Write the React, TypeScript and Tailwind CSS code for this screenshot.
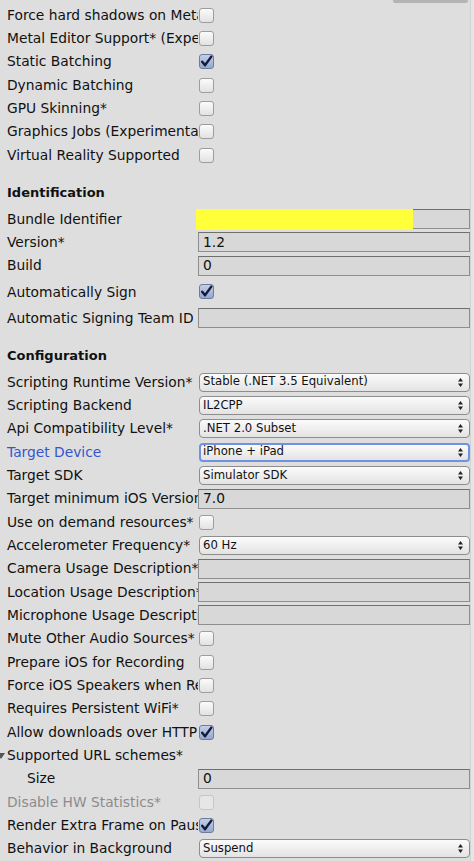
import React from 'react'

type Row =
  | { kind: 'check'; label: string; checked?: boolean; disabled?: boolean; h?: string }
  | { kind: 'text'; label: string; value?: string; redacted?: boolean; indent?: boolean; h?: string }
  | { kind: 'popup'; label: string; value: string; focused?: boolean }
  | { kind: 'foldout'; label: string }
  | { kind: 'heading'; label: string }

const rows: Row[] = [
  { kind: 'check', label: 'Force hard shadows on Metal' },
  { kind: 'check', label: 'Metal Editor Support* (Experimental)' },
  { kind: 'check', label: 'Static Batching', checked: true },
  { kind: 'check', label: 'Dynamic Batching' },
  { kind: 'check', label: 'GPU Skinning*' },
  { kind: 'check', label: 'Graphics Jobs (Experimental)*' },
  { kind: 'check', label: 'Virtual Reality Supported' },
  { kind: 'heading', label: 'Identification' },
  { kind: 'text', label: 'Bundle Identifier', redacted: true },
  { kind: 'text', label: 'Version*', value: '1.2' },
  { kind: 'text', label: 'Build', value: '0' },
  { kind: 'check', label: 'Automatically Sign', checked: true, h: 'h-[29px]' },
  { kind: 'text', label: 'Automatic Signing Team ID' },
  { kind: 'heading', label: 'Configuration' },
  { kind: 'popup', label: 'Scripting Runtime Version*', value: 'Stable (.NET 3.5 Equivalent)' },
  { kind: 'popup', label: 'Scripting Backend', value: 'IL2CPP' },
  { kind: 'popup', label: 'Api Compatibility Level*', value: '.NET 2.0 Subset' },
  { kind: 'popup', label: 'Target Device', value: 'iPhone + iPad', focused: true },
  { kind: 'popup', label: 'Target SDK', value: 'Simulator SDK' },
  { kind: 'text', label: 'Target minimum iOS Version', value: '7.0' },
  { kind: 'check', label: 'Use on demand resources*' },
  { kind: 'popup', label: 'Accelerometer Frequency*', value: '60 Hz' },
  { kind: 'text', label: 'Camera Usage Description*' },
  { kind: 'text', label: 'Location Usage Description*' },
  { kind: 'text', label: 'Microphone Usage Description*' },
  { kind: 'check', label: 'Mute Other Audio Sources*' },
  { kind: 'check', label: 'Prepare iOS for Recording' },
  { kind: 'check', label: 'Force iOS Speakers when Recording Mute Switch is On' },
  { kind: 'check', label: 'Requires Persistent WiFi*' },
  { kind: 'check', label: 'Allow downloads over HTTP (nonsecure)*', checked: true },
  { kind: 'foldout', label: 'Supported URL schemes*' },
  { kind: 'text', label: 'Size', value: '0', indent: true },
  { kind: 'check', label: 'Disable HW Statistics*', disabled: true },
  { kind: 'check', label: 'Render Extra Frame on Pause', checked: true },
  { kind: 'popup', label: 'Behavior in Background', value: 'Suspend' },
]

function Checkbox({ checked, disabled }: { checked?: boolean; disabled?: boolean }) {
  if (disabled) {
    return <div className="ml-[1px] h-[15px] w-[15px] rounded-[3px] border border-[#c6c6c6] bg-[#e6e6e6]" />
  }
  if (checked) {
    return (
      <div className="ml-[1px] flex h-[15px] w-[15px] items-center justify-center rounded-[3px] border border-[#6d7c9e] bg-gradient-to-b from-[#c3cfe6] to-[#95a8cf]">
        <svg width="13" height="13" viewBox="0 0 13 13">
          <path d="M2.2 6.8 L5 10.2 L11.3 1.6" fill="none" stroke="#121c3a" strokeWidth="2.4" strokeLinecap="round" strokeLinejoin="round" />
        </svg>
      </div>
    )
  }
  return <div className="ml-[1px] h-[15px] w-[15px] rounded-[3px] border border-[#9d9d9d] bg-gradient-to-b from-[#fbfbfb] to-[#e2e2e2]" />
}

function TextField({ value, redacted }: { value?: string; redacted?: boolean }) {
  return (
    <div className="relative flex h-[20px] w-[272px] items-center border border-[#8e8e8e] border-t-[#6f6f6f] bg-[#d8d8d8] pl-[4px] text-[13.8px] text-[#111]">
      {value}
      {redacted && <div className="absolute -left-[3px] -top-[1px] h-[21px] w-[217px] bg-[#ffff3a]" />}
    </div>
  )
}

function Popup({ value, focused }: { value: string; focused?: boolean }) {
  return (
    <div
      className={
        focused
          ? 'ml-[1px] flex h-[19px] w-[271px] items-center justify-between rounded-[4px] border-2 border-[#6f93e2] bg-gradient-to-b from-[#fbfbfb] to-[#e3e3e3] pl-[2px] pr-[5px] text-[11.7px] text-[#111]'
          : 'ml-[1px] flex h-[19px] w-[271px] items-center justify-between rounded-[4px] border border-[#8d8d8d] bg-gradient-to-b from-[#fbfbfb] to-[#e3e3e3] pl-[3px] pr-[6px] text-[11.7px] text-[#111]'
      }
    >
      <span>{value}</span>
      <svg width="5" height="9" viewBox="0 0 5 9">
        <path d="M0 3.5 L2.5 0 L5 3.5 Z M0 5.5 L2.5 9 L5 5.5 Z" fill="#222" />
      </svg>
    </div>
  )
}

function FieldRow({ row }: { row: Row }) {
  if (row.kind === 'heading') {
    return (
      <div className="mt-[14px] mb-[3.4px] flex h-[23.33px] items-center pl-[7px] text-[13px] font-bold text-[#111]">
        {row.label}
      </div>
    )
  }
  const h = 'h' in row && row.h ? row.h : 'h-[23.33px]'
  const labelColor =
    row.kind === 'popup' && row.focused
      ? 'text-[#3456cc]'
      : row.kind === 'check' && row.disabled
        ? 'text-[#8c8c8c]'
        : 'text-[#111]'
  const indent = row.kind === 'text' && row.indent ? 'pl-[27px]' : 'pl-[7px]'
  return (
    <div className={`relative flex ${h} items-center`}>
      {row.kind === 'foldout' && (
        <svg className="absolute -left-[3px] top-[9px]" width="8" height="6" viewBox="0 0 8 6">
          <path d="M0 0 L8 0 L4 6 Z" fill="#555" />
        </svg>
      )}
      <div className={`w-[198px] shrink-0 overflow-hidden whitespace-nowrap ${indent} text-[13.8px] ${labelColor}`}>
        {row.label}
      </div>
      {row.kind === 'check' && <Checkbox checked={row.checked} disabled={row.disabled} />}
      {row.kind === 'text' && <TextField value={row.value} redacted={row.redacted} />}
      {row.kind === 'popup' && <Popup value={row.value} focused={row.focused} />}
    </div>
  )
}

export default function App() {
  return (
    <div className="flex h-[861px] w-[474px] overflow-hidden bg-[#dedede] font-['DejaVu_Sans',sans-serif]">
      <div className="flex w-[470px] flex-col">
        <div className="flex h-[3.4px] shrink-0">
          <div className="ml-[393px] h-[3px] w-[75px] rounded-b-[2px] bg-[#b4b4b4]" />
        </div>
        {rows.map((row, i) => (
          <FieldRow key={i} row={row} />
        ))}
      </div>
      <div className="w-[4px] border-l border-[#d2d2d2] bg-[#e6e6e6]" />
    </div>
  )
}
